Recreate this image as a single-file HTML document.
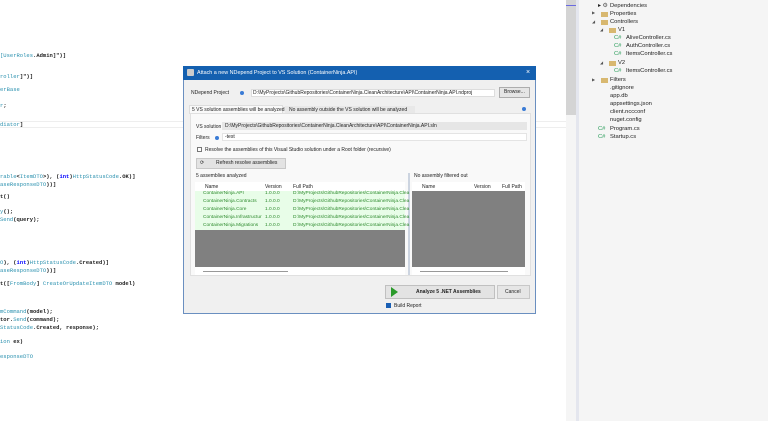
<!DOCTYPE html><html><head><style>
*{margin:0;padding:0;box-sizing:border-box}
body{width:768px;height:421px;background:#fff;position:relative;overflow:hidden;font-family:"Liberation Sans",sans-serif}
.a{position:absolute}
.c{position:absolute;font-family:"Liberation Mono",monospace;font-size:5.5px;color:#1e1e1e;white-space:pre;left:0;font-weight:bold}
.c b{color:#2b91af;font-weight:normal}.c i{font-style:normal;color:#0000ff}
.t{position:absolute;font-size:5.8px;color:#222;white-space:nowrap}
.d{font-size:5px;color:#222;position:absolute;white-space:nowrap}
.row{position:absolute;left:0;width:210px;height:8px;font-size:4.8px;color:#2e8b2e;white-space:nowrap}
</style></head><body>
<div class="c" style="top:52px"><b>[UserRoles</b>.Admin]")]</div>
<div class="c" style="top:73px"><b>roller</b>]")]</div>
<div class="c" style="top:86px"><b>erBase</b></div>
<div class="c" style="top:102px"><b>r</b>;</div>
<div class="a" style="left:0;top:121px;width:566px;height:7px;border-top:1px solid #eee;border-bottom:1px solid #eee"></div>
<div class="c" style="top:121px"><b>diator</b>]</div>
<div class="c" style="top:173px"><b>rable</b>&lt;<b>ItemDTO</b>&gt;), (<i>int</i>)<b>HttpStatusCode</b>.OK)]</div>
<div class="c" style="top:181px"><b>aseResponseDTO</b>))]</div>
<div class="c" style="top:193px">t()</div>
<div class="c" style="top:208px"><b>y</b>();</div>
<div class="c" style="top:216px"><b>Send</b>(query);</div>
<div class="c" style="top:259px"><b>O</b>), (<i>int</i>)<b>HttpStatusCode</b>.Created)]</div>
<div class="c" style="top:267px"><b>aseResponseDTO</b>))]</div>
<div class="c" style="top:280px">t([<b>FromBody</b>] <b>CreateOrUpdateItemDTO</b> model)</div>
<div class="c" style="top:308px"><b>mCommand</b>(model);</div>
<div class="c" style="top:316px">tor.<b>Send</b>(command);</div>
<div class="c" style="top:324px"><b>StatusCode</b>.Created, response);</div>
<div class="c" style="top:338px"><b>ion</b> ex)</div>
<div class="c" style="top:353px"><b>esponseDTO</b></div>

<div class="a" style="left:566px;top:0;width:202px;height:421px;background:#f5f5f5"></div>
<div class="a" style="left:566px;top:0;width:10px;height:115px;background:#d4d4d4"></div>
<div class="a" style="left:566px;top:5px;width:12px;height:1px;background:#6a6ae0"></div>
<div class="a" style="left:576px;top:0;width:3px;height:421px;background:#e4e6ee"></div>
<div class="a" style="left:579px;top:0;width:189px;height:421px;background:#f5f5f5"></div>
<div class="t" style="left:598px;top:3px">▸ <span style="color:#555">⚙</span></div><div class="t" style="left:610px;top:3px">Dependencies</div>
<div class="t" style="left:610px;top:11px">Properties</div>
<div class="t" style="left:610px;top:19px">Controllers</div>
<div class="t" style="left:618px;top:27px">V1</div>
<div class="t" style="left:626px;top:35px">AliveController.cs</div>
<div class="t" style="left:626px;top:43px">AuthController.cs</div>
<div class="t" style="left:626px;top:51px">ItemsController.cs</div>
<div class="t" style="left:618px;top:60px">V2</div>
<div class="t" style="left:626px;top:68px">ItemsController.cs</div>
<div class="t" style="left:610px;top:77px">Filters</div>
<div class="t" style="left:610px;top:85px">.gitignore</div>
<div class="t" style="left:610px;top:93px">app.db</div>
<div class="t" style="left:610px;top:101px">appsettings.json</div>
<div class="t" style="left:610px;top:109px">client.nccconf</div>
<div class="t" style="left:610px;top:117px">nuget.config</div>
<div class="t" style="left:610px;top:126px">Program.cs</div>
<div class="t" style="left:610px;top:134px">Startup.cs</div>
<div class="a" style="left:601px;top:12px;width:7px;height:5px;background:#d8b870"></div>
<div class="a" style="left:601px;top:20px;width:7px;height:5px;background:#d8b870"></div>
<div class="a" style="left:609px;top:28px;width:7px;height:5px;background:#d8b870"></div>
<div class="a" style="left:609px;top:61px;width:7px;height:5px;background:#d8b870"></div>
<div class="a" style="left:601px;top:78px;width:7px;height:5px;background:#d8b870"></div>
<div class="t" style="left:614px;top:35px;color:#2a9d5a">C#</div>
<div class="t" style="left:614px;top:43px;color:#2a9d5a">C#</div>
<div class="t" style="left:614px;top:51px;color:#2a9d5a">C#</div>
<div class="t" style="left:614px;top:68px;color:#2a9d5a">C#</div>
<div class="t" style="left:598px;top:126px;color:#2a9d5a">C#</div>
<div class="t" style="left:598px;top:134px;color:#2a9d5a">C#</div>
<div class="t" style="left:592px;top:10px;color:#555;font-size:4px">▶</div>
<div class="t" style="left:592px;top:19px;color:#555;font-size:4px">◢</div>
<div class="t" style="left:600px;top:27px;color:#555;font-size:4px">◢</div>
<div class="t" style="left:600px;top:60px;color:#555;font-size:4px">◢</div>
<div class="t" style="left:592px;top:77px;color:#555;font-size:4px">▶</div>

<div class="a" style="left:183px;top:66px;width:353px;height:248px;background:#f0f0f0;border:1px solid #6a8fc0"></div>
<div class="a" style="left:183px;top:66px;width:353px;height:14px;background:#1460b0"></div>
<div class="a" style="left:187px;top:69px;width:7px;height:7px;background:#ccc;border-radius:1px"></div>
<div class="d" style="left:197px;top:70px;color:#fff;font-size:5.4px">Attach a new NDepend Project to VS Solution (ContainerNinja.API)</div>
<div class="d" style="left:526px;top:69px;color:#fff;font-size:7px">×</div>
<div class="d" style="left:191px;top:90px">NDepend Project</div>
<div class="a" style="left:240px;top:91px;width:4px;height:4px;border-radius:50%;background:#3a7bd5"></div>
<div class="a" style="left:251px;top:89px;width:244px;height:8px;background:#fff;border:1px solid #ddd"></div>
<div class="d" style="left:253px;top:90px">D:\MyProjects\GithubRepositories\ContainerNinja.CleanArchitecture\API\ContainerNinja.API.ndproj</div>
<div class="a" style="left:499px;top:87px;width:31px;height:11px;background:#e5e5e5;border:1px solid #adadad"></div>
<div class="d" style="left:504px;top:89px">Browse...</div>
<div class="a" style="left:189px;top:105px;width:94px;height:9px;background:#f9f9f9;border:1px solid #ddd;border-bottom:none"></div>
<div class="d" style="left:192px;top:107px">5 VS solution assemblies will be analyzed</div>
<div class="a" style="left:285px;top:106px;width:130px;height:8px;background:#e8e8e8"></div>
<div class="d" style="left:289px;top:107px">No assembly outside the VS solution will be analyzed</div>
<div class="a" style="left:522px;top:107px;width:4px;height:4px;border-radius:50%;background:#3a7bd5"></div>
<div class="a" style="left:190px;top:113px;width:341px;height:163px;background:#f9f9f9;border:1px solid #e0e0e0"></div>
<div class="d" style="left:196px;top:124px">VS solution</div>
<div class="a" style="left:222px;top:122px;width:305px;height:8px;background:#e6e6e6"></div>
<div class="d" style="left:225px;top:123px">D:\MyProjects\GithubRepositories\ContainerNinja.CleanArchitecture\API\ContainerNinja.API.sln</div>
<div class="d" style="left:196px;top:135px">Filters</div>
<div class="a" style="left:215px;top:136px;width:4px;height:4px;border-radius:50%;background:#3a7bd5"></div>
<div class="a" style="left:222px;top:133px;width:305px;height:8px;background:#fff;border:1px solid #e4e4e4"></div>
<div class="d" style="left:225px;top:134px">-test</div>
<div class="a" style="left:197px;top:147px;width:5px;height:5px;background:#fff;border:1px solid #777"></div>
<div class="d" style="left:205px;top:147px">Resolve the assemblies of this Visual Studio solution under a Root folder (recursive)</div>
<div class="a" style="left:196px;top:158px;width:90px;height:11px;background:#e3e3e3;border:1px solid #c8c8c8"></div>
<div class="d" style="left:200px;top:160px">⟳</div>
<div class="d" style="left:216px;top:160px">Refresh resolve assemblies</div>
<div class="d" style="left:196px;top:173px">5 assemblies analyzed</div>
<div class="d" style="left:414px;top:173px">No assembly filtered out</div>
<div class="a" style="left:408px;top:173px;width:2px;height:102px;background:#ccd4e0"></div>
<div class="a" style="left:195px;top:182px;width:210px;height:93px;background:#fff">
 <div class="d" style="left:10px;top:2px">Name</div><div class="d" style="left:70px;top:2px">Version</div><div class="d" style="left:98px;top:2px">Full Path</div>
 <div class="a" style="left:0;top:9px;width:210px;height:39px;background:#e8fde8"></div>
 <div class="row" style="top:9px"><span style="position:absolute;left:8px">ContainerNinja.API</span><span style="position:absolute;left:70px">1.0.0.0</span><span style="position:absolute;left:98px">D:\MyProjects\GithubRepositories\ContainerNinja.Clea</span></div>
 <div class="row" style="top:17px"><span style="position:absolute;left:8px">ContainerNinja.Contracts</span><span style="position:absolute;left:70px">1.0.0.0</span><span style="position:absolute;left:98px">D:\MyProjects\GithubRepositories\ContainerNinja.Clea</span></div>
 <div class="row" style="top:25px"><span style="position:absolute;left:8px">ContainerNinja.Core</span><span style="position:absolute;left:70px">1.0.0.0</span><span style="position:absolute;left:98px">D:\MyProjects\GithubRepositories\ContainerNinja.Clea</span></div>
 <div class="row" style="top:33px"><span style="position:absolute;left:8px">ContainerNinja.Infrastructur</span><span style="position:absolute;left:70px">1.0.0.0</span><span style="position:absolute;left:98px">D:\MyProjects\GithubRepositories\ContainerNinja.Clea</span></div>
 <div class="row" style="top:41px"><span style="position:absolute;left:8px">ContainerNinja.Migrations</span><span style="position:absolute;left:70px">1.0.0.0</span><span style="position:absolute;left:98px">D:\MyProjects\GithubRepositories\ContainerNinja.Clea</span></div>
 <div class="a" style="left:0;top:48px;width:210px;height:37px;background:#808080"></div>
 <div class="a" style="left:8px;top:89px;width:85px;height:1px;background:#999"></div>
</div>
<div class="a" style="left:412px;top:182px;width:113px;height:93px;background:#fff">
 <div class="d" style="left:10px;top:2px">Name</div><div class="d" style="left:62px;top:2px">Version</div><div class="d" style="left:90px;top:2px">Full Path</div>
 <div class="a" style="left:0;top:9px;width:113px;height:76px;background:#808080"></div>
 <div class="a" style="left:8px;top:89px;width:88px;height:1px;background:#999"></div>
</div>
<div class="a" style="left:385px;top:285px;width:110px;height:14px;background:#e3e3e3;border:1px solid #c0c0c0"></div>
<div class="a" style="left:391px;top:287px;width:0;height:0;border-left:7px solid #2a9a2a;border-top:5px solid transparent;border-bottom:5px solid transparent"></div>
<div class="d" style="left:416px;top:289px;font-weight:bold">Analyze 5 .NET Assemblies</div>
<div class="a" style="left:497px;top:285px;width:33px;height:14px;background:#e6e6e6;border:1px solid #c8c8c8"></div>
<div class="d" style="left:505px;top:289px">Cancel</div>
<div class="a" style="left:386px;top:303px;width:5px;height:5px;background:#1a5fb4"></div>
<div class="d" style="left:394px;top:303px">Build Report</div>
</body></html>
